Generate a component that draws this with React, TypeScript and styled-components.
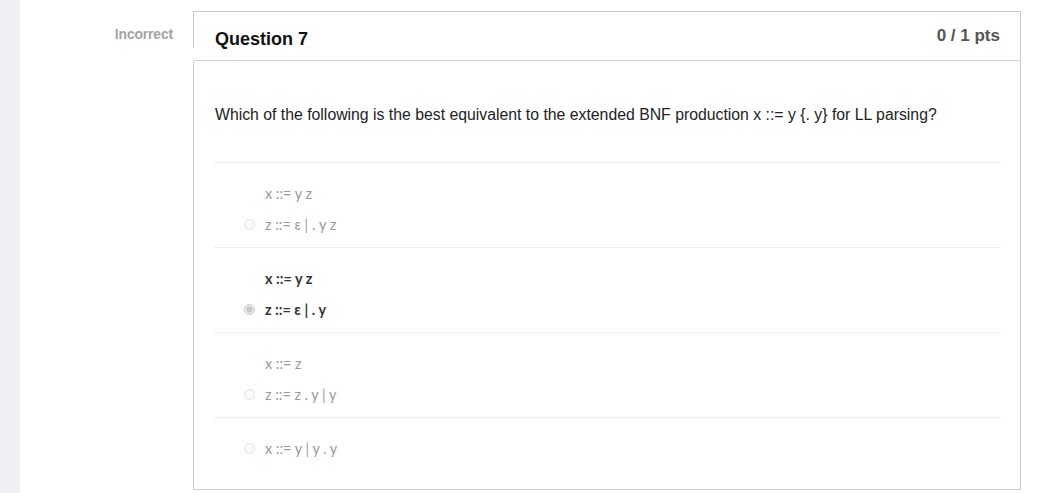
import React from "react";
import styled, { createGlobalStyle } from "styled-components";

const GlobalStyle = createGlobalStyle`
  html, body {
    margin: 0;
    padding: 0;
    background: #ffffff;
  }
  body {
    font-family: "Liberation Sans", Arial, sans-serif;
  }
`;

type Answer = {
  lines: string[];
  selected?: boolean;
};

const answers: Answer[] = [
  { lines: ["x ::= y z", "z ::= ε | . y z"] },
  { lines: ["x ::= y z", "z ::= ε | . y"], selected: true },
  { lines: ["x ::= z", "z ::= z . y | y"] },
  { lines: ["x ::= y | y . y"] },
];

export default function App() {
  return (
    <>
      <GlobalStyle />
      <StyledPage>
        <StyledSideStrip />
        <StyledLabelColumn>
          <StyledResultLabel>Incorrect</StyledResultLabel>
        </StyledLabelColumn>
        <StyledCard>
          <StyledBorderGap />
          <StyledHeader>
            <StyledQuestionTitle>Question 7</StyledQuestionTitle>
            <StyledPoints>0 / 1 pts</StyledPoints>
          </StyledHeader>
          <StyledBody>
            <StyledQuestionText>
              Which of the following is the best equivalent to the extended BNF
              production x ::= y {"{"}. y{"}"} for LL parsing?
            </StyledQuestionText>
            <StyledAnswerList>
              {answers.map((answer, i) => (
                <StyledAnswer key={i} last={i === answers.length - 1}>
                  <StyledRadio selected={!!answer.selected} />
                  <StyledAnswerText selected={!!answer.selected}>
                    {answer.lines.map((line) => (
                      <StyledAnswerLine key={line}>{line}</StyledAnswerLine>
                    ))}
                  </StyledAnswerText>
                </StyledAnswer>
              ))}
            </StyledAnswerList>
          </StyledBody>
        </StyledCard>
      </StyledPage>
    </>
  );
}

const StyledPage = styled.div`
  display: flex;
  align-items: flex-start;
  height: 493px;
  overflow: hidden;
`;

const StyledSideStrip = styled.div`
  width: 20px;
  height: 493px;
  background-color: #f0eff4;
  flex-shrink: 0;
`;

const StyledLabelColumn = styled.div`
  width: 173px;
  padding-right: 20px;
  box-sizing: border-box;
  display: flex;
  justify-content: flex-end;
  padding-top: 27px;
  flex-shrink: 0;
`;

const StyledResultLabel = styled.span`
  font-size: 13.8px;
  font-weight: 700;
  color: #a3a3a3;
  line-height: 16px;
  letter-spacing: -0.1px;
`;

const StyledCard = styled.section`
  position: relative;
  margin-top: 11px;
  width: 828px;
  height: 479px;
  box-sizing: border-box;
  border: 1px solid #c9c9c9;
  flex-shrink: 0;
`;

const StyledBorderGap = styled.div`
  position: absolute;
  left: -1px;
  top: 36px;
  width: 1px;
  height: 13px;
  background: #ffffff;
`;

const StyledHeader = styled.header`
  height: 49px;
  border-bottom: 1px solid #cfcfcf;
  display: flex;
  align-items: center;
  justify-content: space-between;
  padding: 4px 20px 0 21px;
  box-sizing: border-box;
`;

const StyledQuestionTitle = styled.h2`
  margin: 2px 0 0;
  font-size: 18px;
  font-weight: 700;
  color: #111;
`;

const StyledPoints = styled.span`
  font-size: 17px;
  font-weight: 700;
  color: #555;
  margin-top: -4px;
`;

const StyledBody = styled.div`
  padding: 0 19px 0 20px;
`;

const StyledQuestionText = styled.p`
  margin: 0;
  padding: 45px 0 38px 1px;
  font-size: 15.8px;
  line-height: 18px;
  color: #222;
`;

const StyledAnswerList = styled.div`
  display: flex;
  flex-direction: column;
`;

const StyledAnswer = styled.div<{ last: boolean }>`
  display: flex;
  align-items: flex-end;
  border-top: 1px solid #eeeeee;
  padding: 21px 0 ${(p) => (p.last ? 30 : 12)}px 30px;
`;

const StyledRadio = styled.span<{ selected: boolean }>`
  width: 11px;
  height: 11px;
  border-radius: 50%;
  box-sizing: border-box;
  border: 1px solid ${(p) => (p.selected ? "#c4c4c4" : "#e3e3e3")};
  background: ${(p) =>
    p.selected
      ? "radial-gradient(circle, #c9c9c9 0 3px, #f2f2f2 3.5px)"
      : "#fafafa"};
  margin: 0 10px 5px 0;
  flex-shrink: 0;
`;

const StyledAnswerText = styled.div<{ selected: boolean }>`
  display: flex;
  flex-direction: column;
  gap: 11px;
  font-family: Lato, "Open Sans", sans-serif;
  font-size: 14.4px;
  font-weight: ${(p) => (p.selected ? 700 : 400)};
  color: ${(p) => (p.selected ? "#333" : "#9a9a9a")};
`;

const StyledAnswerLine = styled.div`
  line-height: 20px;
`;
